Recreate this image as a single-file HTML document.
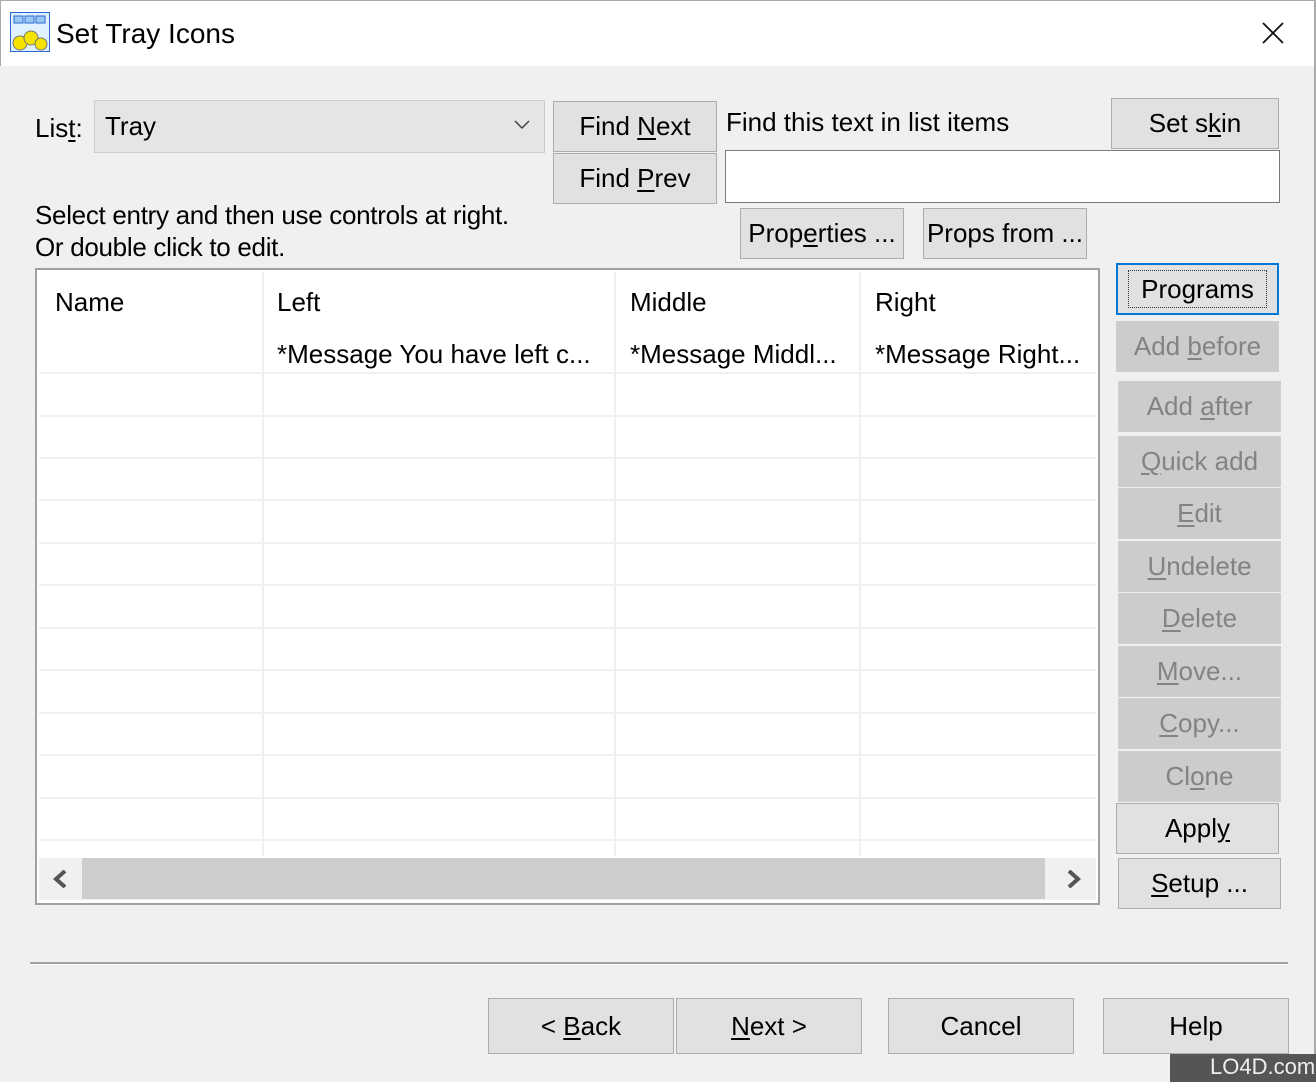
<!DOCTYPE html>
<html><head><style>
*{margin:0;padding:0;box-sizing:border-box}
body{width:1316px;height:1082px;position:relative;overflow:hidden;background:#f0f0f0;font-family:"Liberation Sans",sans-serif;font-size:26px;color:#000}
.a{position:absolute}
.btn{position:absolute;background:#e1e1e1;border:1px solid #adadad;display:flex;align-items:center;justify-content:center;white-space:pre}
.dis{background:#cccccc;border-color:#cfcfcf;color:#838383}
.hl{position:absolute;left:39px;width:1057px;height:2px;background:#f0f0f0}
.vl{position:absolute;top:272px;width:2px;height:584px;background:#f0f0f0}
u{text-decoration:underline;text-underline-offset:3px}
</style></head><body>
<div class="a" style="left:0;top:0;width:1316px;height:66px;background:#fff;border:1px solid #aaa;border-bottom:none"></div>
<div class="a" style="right:0;top:0;width:2px;height:1082px;background:#aaa"></div>
<svg class="a" style="left:10px;top:12px" width="40" height="40" viewBox="0 0 40 40"><rect x="0.5" y="0.5" width="39" height="39" fill="#dff0ff" stroke="#2a6ad0"/><rect x="4" y="4" width="9" height="7" fill="#9cc8f4" stroke="#2a6ad0"/><rect x="15" y="4" width="9" height="7" fill="#9cc8f4" stroke="#2a6ad0"/><rect x="26" y="4" width="9" height="7" fill="#9cc8f4" stroke="#2a6ad0"/><circle cx="10" cy="31" r="7" fill="#f4e400" stroke="#777"/><circle cx="21" cy="26" r="7" fill="#f4e400" stroke="#777"/><circle cx="31" cy="32" r="6" fill="#f4e400" stroke="#777"/></svg>
<div class="a" style="left:56px;top:18px;font-size:28px">Set Tray Icons</div>
<svg class="a" style="left:1262px;top:22px" width="22" height="22"><path d="M1 1 L21 21 M21 1 L1 21" stroke="#111" stroke-width="1.8"/></svg>

<div class="a" style="left:35px;top:113px">Lis<u>t</u>:</div>
<div class="a" style="left:94px;top:100px;width:451px;height:53px;background:#e5e5e5;border:1px solid #ccc"></div>
<div class="a" style="left:105px;top:111px">Tray</div>
<svg class="a" style="left:514px;top:120px" width="16" height="10"><path d="M1 1 L8 8 L15 1" fill="none" stroke="#444" stroke-width="1.5"/></svg>
<div class="btn" style="left:553px;top:101px;width:164px;height:51px"><span>Find <u>N</u>ext</span></div>
<div class="btn" style="left:553px;top:153px;width:164px;height:51px"><span>Find <u>P</u>rev</span></div>
<div class="a" style="left:726px;top:107px">Find this text in list items</div>
<div class="btn" style="left:1111px;top:98px;width:168px;height:51px"><span>Set s<u>k</u>in</span></div>
<div class="a" style="left:725px;top:150px;width:555px;height:53px;background:#fff;border:1px solid #7a7a7a"></div>
<div class="a" style="left:35px;top:199px;line-height:32px;letter-spacing:-0.3px">Select entry and then use controls at right.<br>Or double click to edit.</div>
<div class="btn" style="left:740px;top:208px;width:164px;height:51px"><span>Prop<u>e</u>rties ...</span></div>
<div class="btn" style="left:923px;top:208px;width:164px;height:51px"><span>Props from ...</span></div>

<div class="a" style="left:35px;top:268px;width:1065px;height:637px;background:#fff;border:2px solid #a0a0a0"></div>
<div class="hl" style="top:372px"></div><div class="hl" style="top:415px"></div><div class="hl" style="top:457px"></div><div class="hl" style="top:499px"></div><div class="hl" style="top:542px"></div><div class="hl" style="top:584px"></div><div class="hl" style="top:627px"></div><div class="hl" style="top:669px"></div><div class="hl" style="top:712px"></div><div class="hl" style="top:754px"></div><div class="hl" style="top:797px"></div><div class="hl" style="top:839px"></div>
<div class="vl" style="left:262px"></div><div class="vl" style="left:614px"></div><div class="vl" style="left:859px"></div>
<div class="a" style="left:55px;top:287px">Name</div>
<div class="a" style="left:277px;top:287px">Left</div>
<div class="a" style="left:630px;top:287px">Middle</div>
<div class="a" style="left:875px;top:287px">Right</div>
<div class="a" style="left:277px;top:339px">*Message You have left c...</div>
<div class="a" style="left:630px;top:339px">*Message Middl...</div>
<div class="a" style="left:875px;top:339px">*Message Right...</div>
<div class="a" style="left:39px;top:858px;width:1057px;height:42px;background:#f0f0f0"></div>
<div class="a" style="left:82px;top:858px;width:963px;height:41px;background:#cdcdcd"></div>
<svg class="a" style="left:52px;top:870px" width="16" height="18"><path d="M13 1 L4 9 L13 17" fill="none" stroke="#555" stroke-width="4"/></svg>
<svg class="a" style="left:1066px;top:870px" width="16" height="18"><path d="M3 1 L12 9 L3 17" fill="none" stroke="#555" stroke-width="4"/></svg>

<div class="btn" style="left:1116px;top:263px;width:163px;height:52px;border:2px solid #0078d7"><span style="border:1px dotted #333;padding:0 12px;line-height:36px">Programs</span></div>
<div class="btn dis" style="left:1116px;top:321px;width:163px;height:51px"><span>Add <u>b</u>efore</span></div>
<div class="btn dis" style="left:1118px;top:381px;width:163px;height:51px"><span>Add <u>a</u>fter</span></div>
<div class="btn dis" style="left:1118px;top:436px;width:163px;height:51px"><span><u>Q</u>uick add</span></div>
<div class="btn dis" style="left:1118px;top:488px;width:163px;height:51px"><span><u>E</u>dit</span></div>
<div class="btn dis" style="left:1118px;top:541px;width:163px;height:51px"><span><u>U</u>ndelete</span></div>
<div class="btn dis" style="left:1118px;top:593px;width:163px;height:51px"><span><u>D</u>elete</span></div>
<div class="btn dis" style="left:1118px;top:646px;width:163px;height:51px"><span><u>M</u>ove...</span></div>
<div class="btn dis" style="left:1118px;top:698px;width:163px;height:51px"><span><u>C</u>opy...</span></div>
<div class="btn dis" style="left:1118px;top:751px;width:163px;height:51px"><span>Cl<u>o</u>ne</span></div>
<div class="btn" style="left:1116px;top:803px;width:163px;height:51px"><span>Appl<u>y</u></span></div>
<div class="btn" style="left:1118px;top:858px;width:163px;height:51px"><span><u>S</u>etup ...</span></div>

<div class="a" style="left:30px;top:962px;width:1258px;height:3px;background:#a0a0a0;border-bottom:1px solid #fff"></div>
<div class="btn" style="left:488px;top:998px;width:186px;height:56px"><span>&lt; <u>B</u>ack</span></div>
<div class="btn" style="left:676px;top:998px;width:186px;height:56px"><span><u>N</u>ext &gt;</span></div>
<div class="btn" style="left:888px;top:998px;width:186px;height:56px"><span>Cancel</span></div>
<div class="btn" style="left:1103px;top:998px;width:186px;height:56px"><span>Help</span></div>
<div class="a" style="left:1170px;top:1054px;width:146px;height:28px;background:#555;color:#eee;font-size:22px;padding-left:40px">LO4D.com</div>
</body></html>
